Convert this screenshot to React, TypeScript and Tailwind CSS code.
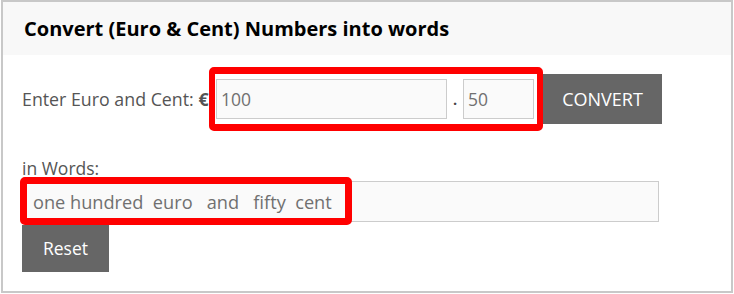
export default function App() {
  const font = { fontFamily: '"Open Sans", "Noto Sans", sans-serif' }
  return (
    <div className="relative w-[734px] h-[294px] bg-white" style={font}>
      <div className="ml-[1px] w-[732px] h-[293px] border-2 border-[#c8c8c8] bg-white">
        <div className="h-[53px] bg-[#f8f8f8] pl-[21px] flex items-center">
          <h1 className="text-[20px] font-bold text-black">
            Convert (Euro &amp; Cent) Numbers into words
          </h1>
        </div>
        <div className="px-[19px]">
          <div className="mt-[19px] flex items-center h-[50px]">
            <label className="text-[17.8px] text-[#555] w-[194px] shrink-0 whitespace-nowrap">
              Enter Euro and Cent: <span className="font-bold">€</span>
            </label>
            <input
              className="w-[231px] h-[40px] border border-[#ccc] bg-[#fafafa] px-[4px] text-[17.5px] text-[#707070] outline-none"
              defaultValue="100"
            />
            <span className="w-[16px] text-center text-[17px] font-semibold text-[#444]">.</span>
            <input
              className="w-[71px] h-[40px] border border-[#ccc] bg-[#fafafa] px-[4px] text-[17.5px] text-[#707070] outline-none"
              defaultValue="50"
            />
            <button className="ml-[9px] w-[119px] h-[50px] bg-[#666] text-white text-[18px]">
              CONVERT
            </button>
          </div>
          <div className="mt-[32px] h-[25px] text-[17.5px] leading-[25px] text-[#555]">in Words:</div>
          <input
            className="w-[637px] h-[41px] border border-[#ccc] bg-[#fafafa] px-[10px] text-[18.2px] text-[#707070] outline-none"
            defaultValue="one hundred  euro   and   fifty  cent"
          />
          <button className="block mt-[3px] w-[87px] h-[47px] bg-[#666] text-white text-[17.5px]">
            Reset
          </button>
        </div>
      </div>
      <div className="absolute left-[209px] top-[67px] w-[334px] h-[64px] border-x-[6px] border-y-[7px] border-[#ff0000] rounded-[5px] pointer-events-none" />
      <div className="absolute left-[20px] top-[177px] w-[332px] h-[48px] border-[7px] border-[#ff0000] rounded-[5px] pointer-events-none" />
    </div>
  )
}
